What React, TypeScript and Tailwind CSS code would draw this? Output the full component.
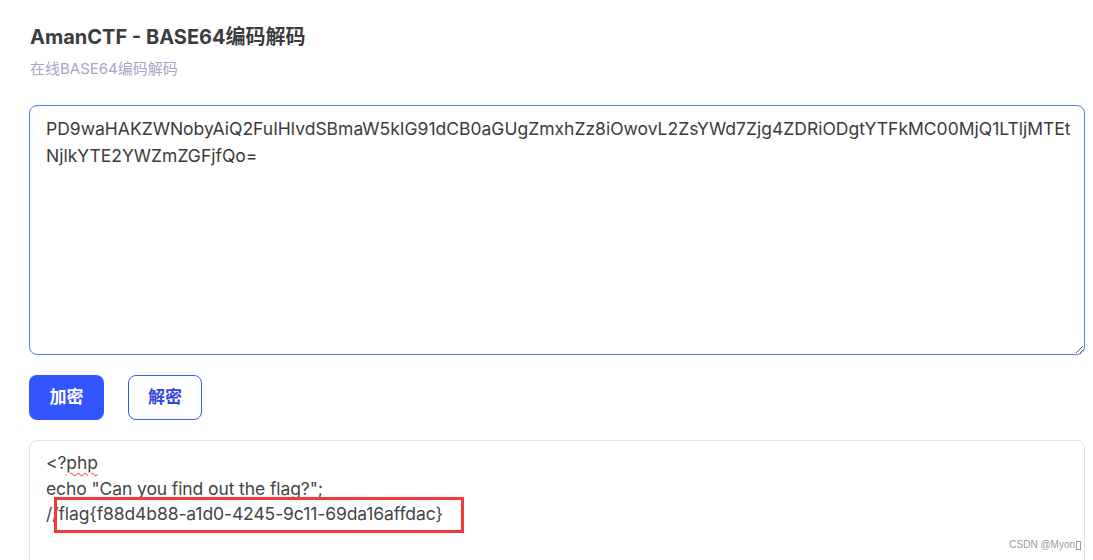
import React, { useState } from 'react';

const ENCODED =
  'PD9waHAKZWNobyAiQ2FuIHlvdSBmaW5kIG91dCB0aGUgZmxhZz8iOwovL2ZsYWd7Zjg4ZDRiODgtYTFkMC00MjQ1LTljMTEtNjlkYTE2YWZmZGFjfQo=';

export default function App() {
  const [text, setText] = useState(ENCODED);

  return (
    <div className="relative h-[560px] bg-white font-['Inter','Noto_Sans_CJK_SC',sans-serif] overflow-hidden">
      <div className="pl-[29px] pr-[8px] pt-[23px]">
        {/* header */}
        <h1 className="pl-px text-[20px] leading-[28px] font-bold text-[#3c3c3c]">
          AmanCTF - BASE64编码解码
        </h1>
        <p className="mt-[8px] pl-px text-[15px] leading-[20px] text-[#a9a5c5]">在线BASE64编码解码</p>

        {/* input */}
        <textarea
          value={text}
          onChange={(e) => setText(e.target.value)}
          spellCheck={false}
          className="mt-[26px] block w-full h-[250px] rounded-[8px] border border-[#5b78f6] pl-[16px] pr-[12px] py-[9px] text-[17.5px] leading-[27px] text-[#3b3b3b] outline-none resize-y break-all"
        />

        {/* actions */}
        <div className="mt-[20px] flex gap-[24px]">
          <button className="w-[75px] h-[45px] rounded-[8px] bg-[#3355ff] text-white text-[17px] font-bold">
            加密
          </button>
          <button className="w-[74px] h-[45px] rounded-[8px] border border-[#3d5af5] bg-white text-[#3445e0] text-[17px] font-bold">
            解密
          </button>
        </div>

        {/* output */}
        <div className="relative mt-[20px] h-[160px] rounded-[8px] border border-[#e4e4e7] px-[16px] pt-[9px] text-[17.5px] tracking-[-0.1px] leading-[25.5px] text-[#454545]">
          <div>
            &lt;?<span className="underline decoration-wavy decoration-[#e53935] decoration-1 underline-offset-[3px]">php</span>
          </div>
          <div>
            echo "Can you find out the flag?<span className="underline decoration-[#3b3bd6] underline-offset-[3px]">"</span>;
          </div>
          <div>//flag{'{'}f88d4b88-a1d0-4245-9c11-69da16affdac{'}'}</div>

          {/* annotation box */}
          <div className="absolute left-[24px] top-[56px] w-[410px] h-[36px] border-[3px] border-[#f23a3a]" />
        </div>
      </div>

      {/* watermark */}
      <div className="absolute right-[12px] bottom-[9px] flex items-center text-[10px] leading-[12px] text-[#9a9a9a] font-['Liberation_Sans',sans-serif]">
        CSDN @Myon
        <span className="ml-px inline-block w-[5px] h-[9px] border border-[#9a9a9a]" />
      </div>
    </div>
  );
}
